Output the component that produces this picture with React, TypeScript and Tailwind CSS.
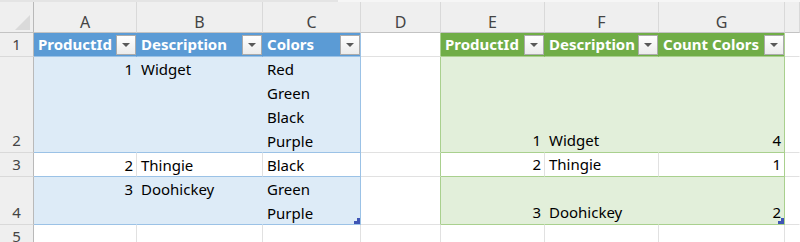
import type { ReactNode } from "react"

// Two Excel tables side by side: source rows with multi-line colours,
// and a summary table counting them.

const FONT = "font-['Noto_Sans',_'Open_Sans',_sans-serif]"

type Tone = "blue" | "green"

const tone = {
  blue: { head: "bg-[#5b9bd5]", band: "bg-[#ddebf7]", line: "border-[#9bc2e6]", headLine: "border-r-[#5b9bd5]", bandLine: "border-r-[#ddebf7]" },
  green: { head: "bg-[#70ad47]", band: "bg-[#e2efda]", line: "border-[#a9d08e]", headLine: "border-r-[#70ad47]", bandLine: "border-r-[#e2efda]" },
}

function FilterButton() {
  return (
    <div className="flex h-[20px] w-[20px] shrink-0 items-center justify-center border border-[#ababab] bg-gradient-to-b from-white to-[#ececec]">
      <svg width="8" height="4" viewBox="0 0 8 4">
        <path d="M0 0h8L4 4z" fill="#595959" />
      </svg>
    </div>
  )
}

function ColHead({ label, last }: { label?: string; last?: boolean }) {
  return (
    <div
      className={`flex items-end justify-center border-b border-b-[#c3c3c3] bg-[#efefef] text-[16px] leading-[20px] text-[#444] ${
        last ? "" : "border-r border-r-[#d9d9d9]"
      }`}
    >
      {label}
    </div>
  )
}

function RowHead({ n }: { n: number }) {
  return (
    <div className="flex items-end justify-center border-r border-b border-r-[#b9b9b9] border-b-[#d9d9d9] bg-[#efefef] text-[15px] leading-[24px] text-[#444]">
      {n}
    </div>
  )
}

function Blank({ right = "border-r-[#e1e1e1]", bottom = "border-b-[#e1e1e1]" }: { right?: string; bottom?: string }) {
  return <div className={`border-r border-b bg-white ${right} ${bottom}`} />
}

function HeadCell({ t, label, edge }: { t: Tone; label: string; edge?: boolean }) {
  const c = tone[t]
  return (
    <div
      className={`flex items-center justify-between border-r border-b pl-[4px] text-[15px] font-bold text-white ${c.head} ${c.line} ${
        edge ? "" : c.headLine
      }`}
    >
      <span className="truncate leading-[23px]">{label}</span>
      <FilterButton />
    </div>
  )
}

function Cell({
  t,
  banded,
  edge,
  align = "left",
  valign = "top",
  handle,
  children,
}: {
  t: Tone
  banded: boolean
  edge?: boolean
  align?: "left" | "right"
  valign?: "top" | "bottom"
  handle?: boolean
  children?: ReactNode
}) {
  const c = tone[t]
  const fill = banded ? c.band : "bg-white"
  const rightLine = edge ? "" : banded ? c.bandLine : "border-r-[#e1e1e1]"
  return (
    <div
      className={`relative flex flex-col border-r border-b text-[15px] leading-[24px] text-black ${fill} ${c.line} ${rightLine} ${
        valign === "top" ? "justify-start" : "justify-end"
      } ${align === "right" ? "items-end pr-[3px]" : "items-start pl-[4px]"}`}
    >
      {children}
      {handle && (
        <>
          <span className="absolute right-0 bottom-0 h-[3px] w-[6px] bg-[#3f55b5]" />
          <span className="absolute right-0 bottom-[3px] h-[3px] w-[3px] bg-[#3f55b5]" />
        </>
      )}
    </div>
  )
}

function Lines({ items }: { items: string[] }) {
  return (
    <>
      {items.map((s) => (
        <span key={s}>{s}</span>
      ))}
    </>
  )
}

export default function App() {
  return (
    <div className={`h-[242px] w-[800px] overflow-hidden bg-white ${FONT}`}>
      <div className="h-[2px] bg-[linear-gradient(to_right,#e4e4e4_338px,#f6f6f6_338px)]" />
      <div className="grid grid-cols-[34px_103px_126px_98px_80px_104px_114px_126px_1fr] grid-rows-[31px_24px_96px_24px_48px_24px]">
        {/* column headers */}
        <div className="relative border-r border-b border-r-[#b9b9b9] border-b-[#c3c3c3] bg-[#efefef]">
          <svg className="absolute right-[3px] bottom-[2px]" width="15" height="15" viewBox="0 0 15 15">
            <path d="M15 0v15H0z" fill="#dadada" />
          </svg>
        </div>
        <ColHead label="A" />
        <ColHead label="B" />
        <ColHead label="C" />
        <ColHead label="D" />
        <ColHead label="E" />
        <ColHead label="F" />
        <ColHead label="G" />
        <ColHead />

        {/* row 1: table headers */}
        <RowHead n={1} />
        <HeadCell t="blue" label="ProductId" />
        <HeadCell t="blue" label="Description" />
        <HeadCell t="blue" label="Colors" edge />
        <Blank right="border-r-[#a9d08e]" />
        <HeadCell t="green" label="ProductId" />
        <HeadCell t="green" label="Description" />
        <HeadCell t="green" label="Count Colors" edge />
        <Blank right="border-r-transparent" />

        {/* row 2 */}
        <RowHead n={2} />
        <Cell t="blue" banded align="right">1</Cell>
        <Cell t="blue" banded>Widget</Cell>
        <Cell t="blue" banded edge>
          <Lines items={["Red", "Green", "Black", "Purple"]} />
        </Cell>
        <Blank right="border-r-[#a9d08e]" />
        <Cell t="green" banded align="right" valign="bottom">1</Cell>
        <Cell t="green" banded valign="bottom">Widget</Cell>
        <Cell t="green" banded edge align="right" valign="bottom">4</Cell>
        <Blank right="border-r-transparent" />

        {/* row 3 */}
        <RowHead n={3} />
        <Cell t="blue" banded={false} align="right">2</Cell>
        <Cell t="blue" banded={false}>Thingie</Cell>
        <Cell t="blue" banded={false} edge>Black</Cell>
        <Blank right="border-r-[#a9d08e]" />
        <Cell t="green" banded={false} align="right" valign="bottom">2</Cell>
        <Cell t="green" banded={false} valign="bottom">Thingie</Cell>
        <Cell t="green" banded={false} edge align="right" valign="bottom">1</Cell>
        <Blank right="border-r-transparent" />

        {/* row 4 */}
        <RowHead n={4} />
        <Cell t="blue" banded align="right">3</Cell>
        <Cell t="blue" banded>Doohickey</Cell>
        <Cell t="blue" banded edge handle>
          <Lines items={["Green", "Purple"]} />
        </Cell>
        <Blank right="border-r-[#a9d08e]" />
        <Cell t="green" banded align="right" valign="bottom">3</Cell>
        <Cell t="green" banded valign="bottom">Doohickey</Cell>
        <Cell t="green" banded edge align="right" valign="bottom" handle>2</Cell>
        <Blank right="border-r-transparent" />

        {/* row 5 */}
        <RowHead n={5} />
        <Blank />
        <Blank />
        <Blank />
        <Blank />
        <Blank />
        <Blank />
        <Blank />
        <Blank right="border-r-transparent" />
      </div>
    </div>
  )
}
